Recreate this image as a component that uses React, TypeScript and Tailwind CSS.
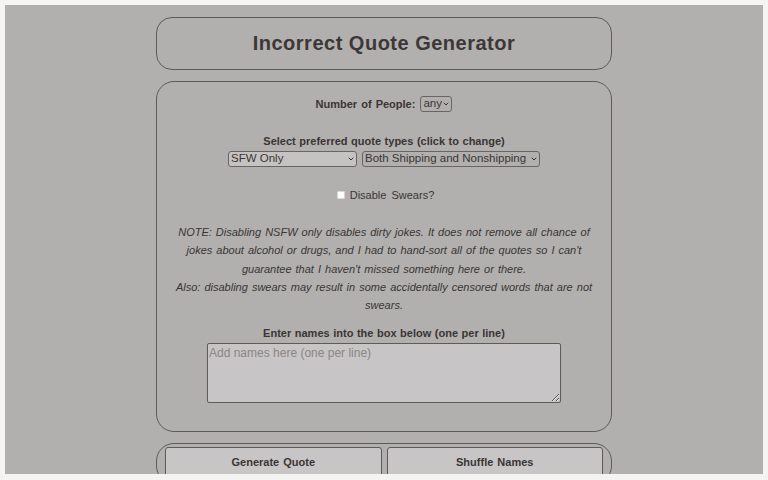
import { ChevronDown } from 'lucide-react';

const font = { fontFamily: '"Liberation Sans", Arial, sans-serif' };

// Fake dropdown that looks like the browser's default select
function Dropdown({ value, width, light }: { value: string; width: string; light?: boolean }) {
  return (
    <div
      className={`inline-flex h-[16px] items-center justify-between rounded-[3px] border border-[#6a6565] pl-[2px] pr-[1px] text-[11.5px] leading-none text-[#3a3535] ${width} ${
        light ? 'bg-[#c5c3c2]' : 'bg-[#b1b0ae]'
      }`}
    >
      <span className="whitespace-nowrap">{value}</span>
      <ChevronDown className="h-[8px] w-[8px] shrink-0 text-[#3a3535]" strokeWidth={3} />
    </div>
  );
}

export default function App() {
  return (
    <div className="h-[480px] w-full bg-[#f4f4f2] pb-[6px] pl-[5px] pr-[5px] pt-[5px]" style={font}>
      <div className="flex h-full flex-col items-center overflow-hidden bg-[#b1b0ae] pt-[12px] text-[#3a3535]">
        <div className="w-[456px]">
          {/* Header */}
          <div className="flex h-[53px] items-center justify-center rounded-[16px] border border-[#5f5a5a]">
            <h1 className="-mt-[2px] text-[20px] font-bold tracking-[0.5px] text-[#3d3737]">Incorrect Quote Generator</h1>
          </div>

          {/* Settings */}
          <div className="mt-[11px] rounded-[18px] border border-[#5f5a5a] px-[18px] pb-[28px] pt-[14px] text-center text-[11px]">
            <div className="flex h-[16px] items-center justify-center gap-[5px]">
              <span className="font-bold [word-spacing:1px]">Number of People:</span>
              <Dropdown value="any" width="w-[32px]" />
            </div>

            <p className="mt-[22px] font-bold leading-[14px] [word-spacing:0.5px]">
              Select preferred quote types (click to change)
            </p>
            <div className="mt-[3px] flex items-center justify-center gap-[5px]">
              <Dropdown value="SFW Only" width="w-[129px]" light />
              <Dropdown value="Both Shipping and Nonshipping" width="w-[178px]" />
            </div>

            <label className="mt-[21px] flex h-[14px] items-center justify-center gap-[5px] [word-spacing:2px]">
              <span className="ml-[3px] h-[8px] w-[8px] rounded-[1px] border border-[#d8d6d6] bg-white" />
              <span>Disable Swears?</span>
            </label>

            <p className="mt-[21px] italic leading-[18.3px] [word-spacing:1px]">
              NOTE: Disabling NSFW only disables dirty jokes. It does not remove all chance of jokes about alcohol or
              drugs, and I had to hand-sort all of the quotes so I can't guarantee that I haven't missed something here
              or there.
              <br />
              Also: disabling swears may result in some accidentally censored words that are not swears.
            </p>

            <p className="mt-[12px] font-bold leading-[14px] [word-spacing:0.5px]">
              Enter names into the box below (one per line)
            </p>
            <textarea
              className="mx-auto mt-[3px] block h-[60px] w-[354px] resize-y rounded-[2px] border border-[#5f5a5a] bg-[#c7c5c5] px-[1px] py-[2px] text-[12px] leading-[14px] text-[#3a3535] outline-none placeholder:text-[#8a8686]"
              placeholder="Add names here (one per line)"
            />
          </div>

          {/* Actions */}
          <div className="mt-[11px] flex gap-[5px] rounded-[18px] border border-[#5f5a5a] px-[8px] pb-[6px] pt-[3px]">
            <button className="h-[30px] flex-1 rounded-t-[3px] border border-[#5f5a5a] bg-[#c7c5c5] text-[11px] font-bold text-[#3a3535] [word-spacing:1px]">
              Generate Quote
            </button>
            <button className="h-[30px] flex-1 rounded-t-[3px] border border-[#5f5a5a] bg-[#c7c5c5] text-[11px] font-bold text-[#3a3535] [word-spacing:1px]">
              Shuffle Names
            </button>
          </div>
        </div>
      </div>
    </div>
  );
}
